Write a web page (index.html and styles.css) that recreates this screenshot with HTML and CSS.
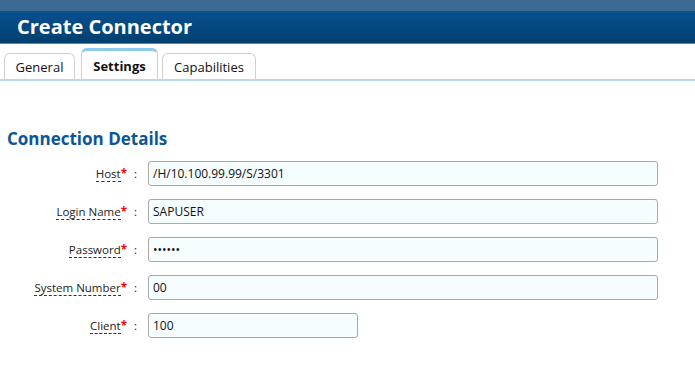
FILE: index.html
```html
<!DOCTYPE html>
<html>
<head>
<meta charset="utf-8">
<link rel="stylesheet" href="styles.css">
</head>
<body>
<div class="header">
  <h1 class="title">Create Connector</h1>
</div>
<div class="tabs">
  <div class="tab">General</div>
  <div class="tab active">Settings</div>
  <div class="tab">Capabilities</div>
</div>
<div class="content">
  <h2 class="section">Connection Details</h2>
  <div class="form">
    <label class="label"><span class="lt">Host</span><span class="req">*</span><span class="colon">:</span></label>
    <input class="field" type="text" value="/H/10.100.99.99/S/3301">
    <label class="label"><span class="lt">Login Name</span><span class="req">*</span><span class="colon">:</span></label>
    <input class="field" type="text" value="SAPUSER">
    <label class="label"><span class="lt">Password</span><span class="req">*</span><span class="colon">:</span></label>
    <input class="field pw" type="password" value="secret">
    <label class="label"><span class="lt">System Number</span><span class="req">*</span><span class="colon">:</span></label>
    <input class="field" type="text" value="00">
    <label class="label"><span class="lt">Client</span><span class="req">*</span><span class="colon">:</span></label>
    <input class="field short" type="text" value="100">
  </div>
</div>
</body>
</html>
```
FILE: styles.css
```css
html, body {
  margin: 0;
  padding: 0;
  background: #ffffff;
  font-family: "Open Sans", "DejaVu Sans", sans-serif;
  color: #111;
}
.header {
  box-sizing: border-box;
  height: 44px;
  border-top: 11px solid #3b6a92;
  background: linear-gradient(#0a5090, #00406f);
  border-bottom: 1px solid #2a9cc0;
  display: flex;
  align-items: center;
}
.title {
  margin: 0;
  padding-left: 17px;
  color: #ffffff;
  font-size: 20px;
  font-weight: 700;
  line-height: 32px;
}
.tabs {
  display: flex;
  align-items: flex-end;
  box-sizing: border-box;
  height: 37px;
  padding-left: 4px;
  border-bottom: 2px solid #b9d8ee;
}
.tab {
  box-sizing: border-box;
  height: 26px;
  padding: 0 10px;
  border: 1px solid #d0d0d0;
  border-bottom: none;
  border-radius: 6px 6px 0 0;
  font-size: 13px;
  line-height: 26px;
  color: #111;
  margin-right: 4px;
  text-align: center;
}
.tab:first-child { width: 71px; margin-right: 6px; }
.tab.active {
  width: 77px;
  height: 31px;
  line-height: 30px;
  font-weight: 700;
  border-top: 3px solid #8ccbeb;
}
.tab:last-child { width: 94px; }
.content {
  padding: 0 0 0 7px;
}
.section {
  margin: 47px 0 0 0;
  font-size: 17px;
  font-weight: 700;
  color: #0c5696;
  line-height: 22px;
}
.form {
  margin-top: 11px;
  display: grid;
  grid-template-columns: 130px 510px;
  column-gap: 11px;
  row-gap: 13px;
  align-items: center;
}
.label {
  font-size: 11.5px;
  text-align: right;
  white-space: nowrap;
  color: #222;
}
.lt {
  border-bottom: 1px dashed #333;
}
.req {
  color: #ff0000;
  font-weight: 700;
}
.colon {
  margin-left: 7px;
}
.field {
  box-sizing: border-box;
  height: 25px;
  width: 510px;
  border: 1px solid #a9a9a9;
  border-radius: 3px;
  background: #f5fdff;
  font-family: "Open Sans", "DejaVu Sans", sans-serif;
  font-size: 12px;
  color: #111;
  padding: 0 4px;
  margin: 0;
  outline: none;
}
.field.short { width: 210px; }
```
